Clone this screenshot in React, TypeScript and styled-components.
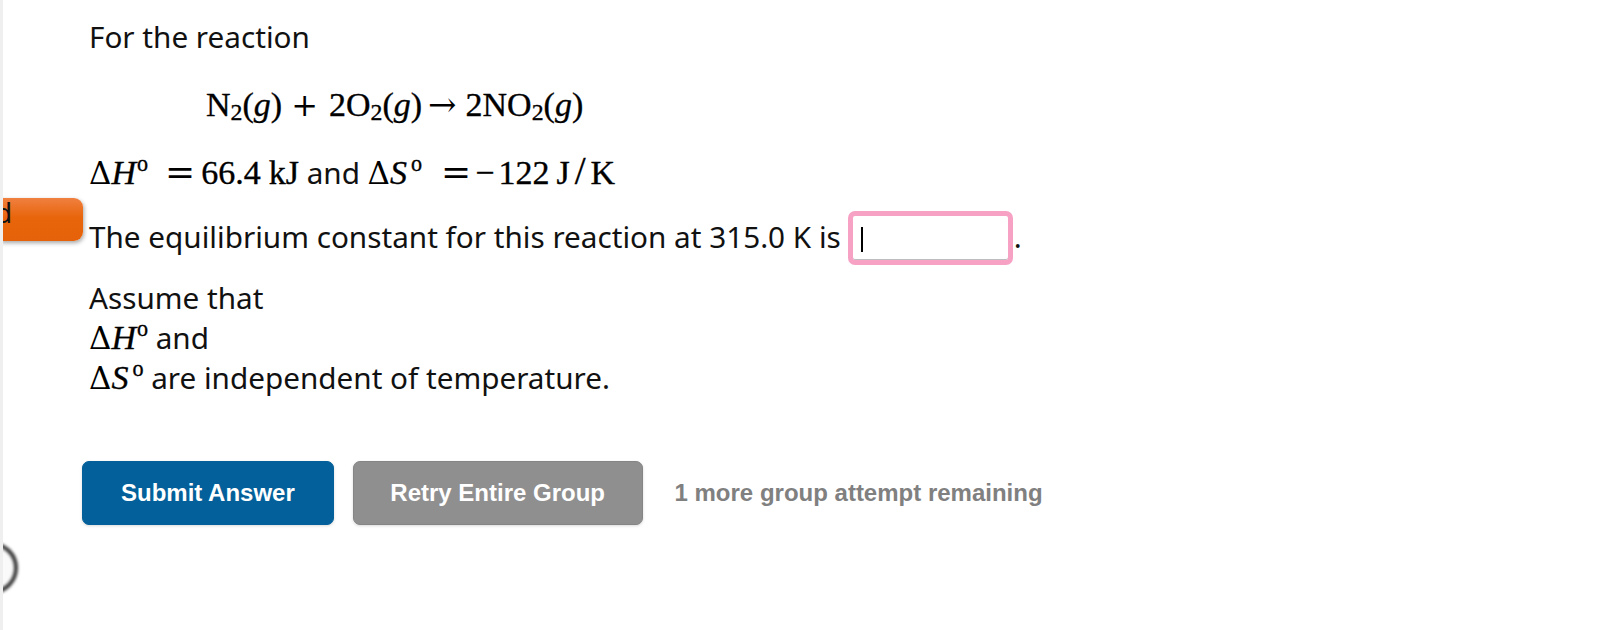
import React from "react";
import styled, { createGlobalStyle } from "styled-components";

const Global = createGlobalStyle`
  html, body { margin: 0; padding: 0; background: #ffffff; }
  body { font-family: "Noto Sans", "Open Sans", sans-serif; }
`;

const Page = styled.div`
  position: relative;
  width: 1616px;
  height: 630px;
  overflow: hidden;
  box-sizing: border-box;
  border-left: 3px solid #efefef;
  padding: 17px 0 0 86px;
  font-size: 29.7px;
  line-height: 40px;
  color: #111;
`;

const Line = styled.div<{ $mt?: number; $indent?: number }>`
  margin-top: ${(p) => p.$mt ?? 0}px;
  padding-left: ${(p) => p.$indent ?? 0}px;
  white-space: nowrap;
`;

const MathRun = styled.span`
  font-family: "Liberation Serif", "Times New Roman", serif;
  font-size: 34px;
  line-height: 0;
  color: #000;
  -webkit-text-stroke: 0.35px #000;
`;

const Mi = styled.span`
  font-style: italic;
`;

const Delta = styled.span`
  font-family: "DejaVu Serif", serif;
  font-size: 31px;
  -webkit-text-stroke: 0;
`;

const Sub = styled.span`
  font-size: 0.7em;
  vertical-align: -0.18em;
  line-height: 0;
`;

const Deg = styled.span<{ $ml?: number }>`
  font-size: 0.65em;
  vertical-align: 0.6em;
  line-height: 0;
  margin-left: ${(p) => p.$ml ?? 1}px;
`;

const Rel = styled.span<{ $l: number; $r: number; $size?: number }>`
  font-family: "DejaVu Serif", serif;
  font-size: ${(p) => p.$size ?? 32}px;
  -webkit-text-stroke: 0;
  margin: 0 ${(p) => p.$r}px 0 ${(p) => p.$l}px;
`;

const Arrow = styled.span`
  font-family: "DejaVu Serif", serif;
  font-size: 34px;
  -webkit-text-stroke: 0;
  margin: 0 9px 0 6px;
`;

const Slash = styled.span`
  display: inline-block;
  font-size: 1.15em;
  margin: 0 5px;
`;

const Gap = styled.span<{ $w: number }>`
  display: inline-block;
  width: ${(p) => p.$w}px;
`;

const AnswerRow = styled.div`
  margin-top: 18px;
  display: flex;
  align-items: center;
  height: 54px;
  white-space: nowrap;
`;

const RowText = styled.span`
  line-height: 38px;
  margin-bottom: 2px;
`;

const Field = styled.div`
  box-sizing: border-box;
  width: 165px;
  height: 54px;
  margin-left: 7px;
  border: 5px solid #f7a1c4;
  border-radius: 7px;
  background: #fff;
  display: flex;
  align-items: center;
  box-shadow: inset 0 -1px 0 #bdbdbd;
`;

const Caret = styled.span`
  display: block;
  width: 2px;
  height: 25px;
  margin-left: 8px;
  margin-top: 2px;
  background: #000;
`;

const Period = styled.span`
  line-height: 38px;
  margin-bottom: 2px;
  margin-left: 1px;
`;

const ButtonRow = styled.div`
  margin-top: 63px;
  margin-left: -7px;
  display: flex;
  align-items: center;
  gap: 19px;
  font-family: "Liberation Sans", Arial, sans-serif;
`;

const Button = styled.button<{ $variant: "primary" | "muted"; $pad: number }>`
  box-sizing: border-box;
  height: 64px;
  padding: 0 ${(p) => p.$pad}px;
  border-radius: 7px;
  border: 1px solid ${(p) => (p.$variant === "primary" ? "#03609a" : "#858585")};
  background: ${(p) => (p.$variant === "primary" ? "#03609a" : "#8f8f8f")};
  color: #fff;
  font-family: "Liberation Sans", Arial, sans-serif;
  font-weight: 700;
  font-size: 24px;
  box-shadow: 0 1px 3px rgba(0, 0, 0, 0.15);
  cursor: pointer;
`;

const Remaining = styled.span`
  margin-left: 13px;
  font-weight: 700;
  font-size: 24px;
  color: #808080;
`;

const SideTab = styled.div`
  position: absolute;
  left: -3px;
  top: 198px;
  width: 83px;
  height: 43px;
  overflow: hidden;
  border-radius: 0 9px 9px 0;
  background: linear-gradient(#f08040, #e8650b 45%, #e6620a);
  box-shadow: 1px 2px 4px rgba(0, 0, 0, 0.35);
  font-size: 28px;
  line-height: 28px;
  color: #111;
`;

const TabLabel = styled.span`
  display: block;
  margin-left: -5px;
`;

const EdgeCircle = styled.div`
  position: absolute;
  left: -37px;
  top: 542px;
  width: 44px;
  height: 44px;
  border-radius: 50%;
  border: 4px solid #3a3a3a;
  background: #fafafa;
  filter: blur(1.5px);
`;

export default function App() {
  return (
    <>
      <Global />
      <Page>
        <Line>For the reaction</Line>
        <Line $mt={28} $indent={117}>
          <MathRun>
            N<Sub>2</Sub>(<Mi>g</Mi>)<Rel $l={9} $r={11}>+</Rel>2O<Sub>2</Sub>(<Mi>g</Mi>)
            <Arrow>→</Arrow>2NO<Sub>2</Sub>(<Mi>g</Mi>)
          </MathRun>
        </Line>
        <Line $mt={28}>
          <MathRun>
            <Delta>Δ</Delta>
            <Mi>H</Mi>
            <Deg>o</Deg>
            <Rel $l={17} $r={6} $size={36}>=</Rel>66.4<Gap $w={8} />kJ
          </MathRun>{" "}
          and{" "}
          <MathRun>
            <Delta>Δ</Delta>
            <Mi>S</Mi>
            <Deg $ml={4}>o</Deg>
            <Rel $l={19} $r={4} $size={36}>=</Rel>−<Gap $w={4} />122<Gap $w={7} />J<Slash>/</Slash>K
          </MathRun>
        </Line>
        <AnswerRow>
          <RowText>The equilibrium constant for this reaction at 315.0 K is</RowText>
          <Field>
            <Caret />
          </Field>
          <Period>.</Period>
        </AnswerRow>
        <Line $mt={13}>Assume that</Line>
        <Line>
          <MathRun>
            <Delta>Δ</Delta>
            <Mi>H</Mi>
            <Deg>o</Deg>
          </MathRun>{" "}
          and
        </Line>
        <Line>
          <MathRun>
            <Delta>Δ</Delta>
            <Mi>S</Mi>
            <Deg $ml={4}>o</Deg>
          </MathRun>{" "}
          are independent of temperature.
        </Line>
        <ButtonRow>
          <Button $variant="primary" $pad={38}>Submit Answer</Button>
          <Button $variant="muted" $pad={36.5}>Retry Entire Group</Button>
          <Remaining>1 more group attempt remaining</Remaining>
        </ButtonRow>
        <SideTab>
          <TabLabel>d</TabLabel>
        </SideTab>
        <EdgeCircle />
      </Page>
    </>
  );
}
